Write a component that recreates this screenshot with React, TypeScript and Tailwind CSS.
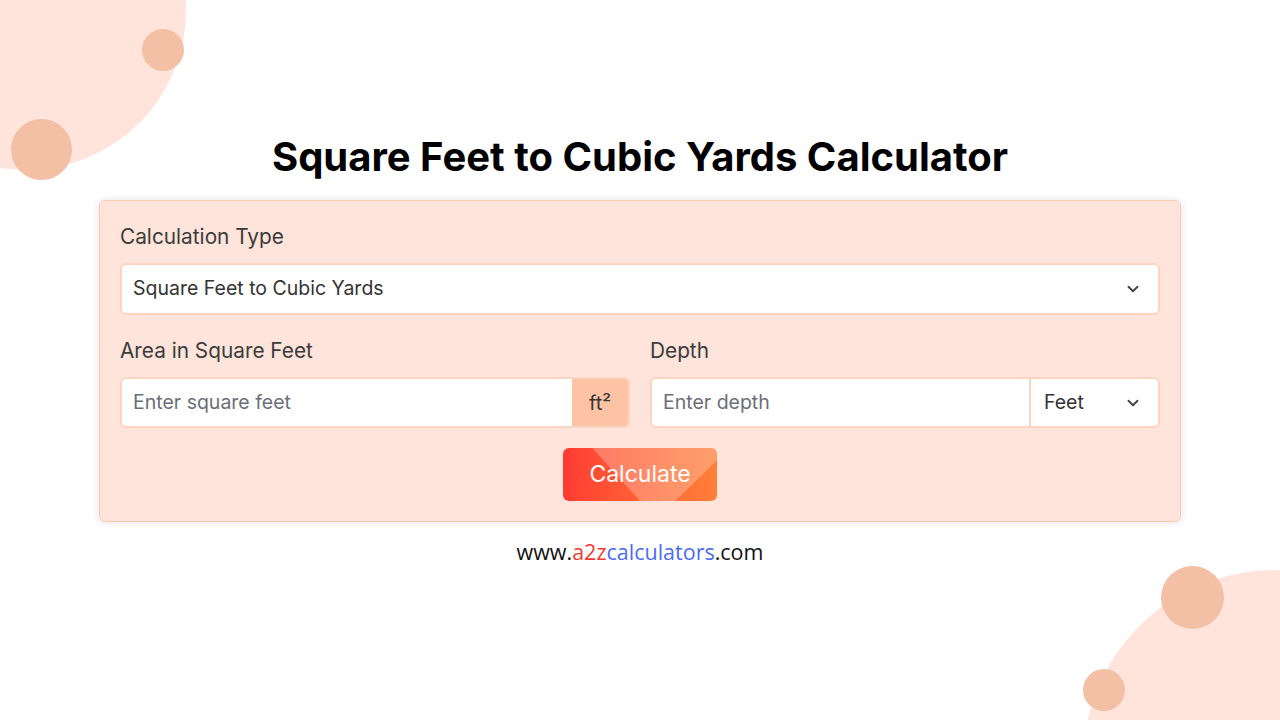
import { ChevronDown } from 'lucide-react';

const font = { fontFamily: 'Inter, "Noto Sans", sans-serif' };

function Field({ label, children }: { label: string; children: React.ReactNode }) {
  return (
    <div className="flex flex-col">
      <label className="text-[20.8px] leading-[28px] text-[#3b3b3b] mb-3">{label}</label>
      {children}
    </div>
  );
}

export default function App() {
  return (
    <div className="relative h-[720px] w-[1280px] overflow-hidden bg-white" style={font}>
      {/* decorations */}
      <div className="absolute -left-[134px] -top-[150px] h-[320px] w-[320px] rounded-full bg-[#fee4da]" />
      <div className="absolute left-[142px] top-[29px] h-[42px] w-[42px] rounded-full bg-[#f4c0a5]" />
      <div className="absolute left-[11px] top-[119px] h-[61px] w-[61px] rounded-full bg-[#f4c0a5]" />
      <div className="absolute left-[1083px] top-[570px] h-[384px] w-[384px] rounded-full bg-[#fee4da]" />
      <div className="absolute left-[1161px] top-[566px] h-[63px] w-[63px] rounded-full bg-[#f4c0a5]" />
      <div className="absolute left-[1083px] top-[669px] h-[42px] w-[42px] rounded-full bg-[#f4c0a5]" />

      <div className="relative flex flex-col items-center pt-[133px]">
        <h1 className="text-[40px] leading-[48px] font-bold text-black mb-[19px]">
          Square Feet to Cubic Yards Calculator
        </h1>

        <div className="w-[1082px] rounded-md border border-[#fcc9b4] bg-[#fee4db] px-5 pt-[22px] pb-5 shadow-[0_0_8px_rgba(0,0,0,0.12)]">
          <Field label="Calculation Type">
            <div className="flex h-[52px] items-center justify-between rounded-md border-2 border-[#fdd3c2] bg-white pl-[11px] pr-[16px]">
              <span className="text-[19.5px] text-[#333]">Square Feet to Cubic Yards</span>
              <ChevronDown className="h-[18px] w-[18px] text-[#444]" strokeWidth={2.5} />
            </div>
          </Field>

          <div className="mt-[22px] grid grid-cols-2 gap-5">
            <Field label="Area in Square Feet">
              <div className="flex h-[51px] overflow-hidden rounded-md border-2 border-[#fdd3c2] bg-white">
                <span className="flex flex-1 items-center pl-[11px] text-[19.5px] text-[#6b6e78]">Enter square feet</span>
                <span className="flex w-[56px] items-center justify-center bg-[#fec3a5] text-[20px] text-[#333]">ft²</span>
              </div>
            </Field>
            <Field label="Depth">
              <div className="flex h-[51px] overflow-hidden rounded-md border-2 border-[#fdd3c2] bg-white">
                <span className="flex flex-1 items-center pl-[11px] text-[19.5px] text-[#6b6e78]">Enter depth</span>
                <span className="flex w-[129px] items-center justify-between border-l-2 border-[#fdd3c2] pl-[13px] pr-[16px] text-[19.5px] text-[#333]">
                  Feet
                  <ChevronDown className="h-[18px] w-[18px] text-[#444]" strokeWidth={2.5} />
                </span>
              </div>
            </Field>
          </div>

          <div className="mt-5 flex justify-center">
            <button className="relative h-[53px] w-[154px] overflow-hidden rounded-md bg-gradient-to-r from-[#ff3a32] to-[#ff7f38] text-[23px] text-white">
              <span className="absolute inset-0 bg-white/25 [clip-path:polygon(19%_0,100%_0,100%_23%,73%_100%,50%_100%)]" />
              <span className="relative">Calculate</span>
            </button>
          </div>
        </div>

        <p className="mt-4 text-[21.5px] leading-[28px] text-[#111]" style={{ fontFamily: '"Open Sans", sans-serif' }}>
          www.<span className="text-[#f23a32]">a2z</span>
          <span className="text-[#4a6cf5]">calculators</span>.com
        </p>
      </div>
    </div>
  );
}
